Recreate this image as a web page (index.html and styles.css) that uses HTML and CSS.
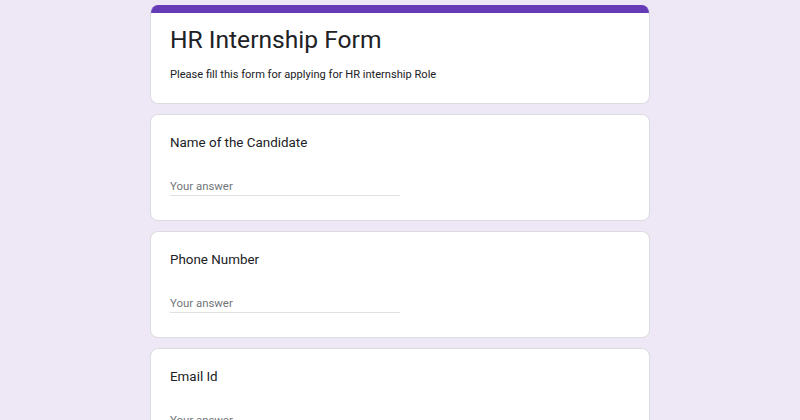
FILE: index.html
```html
<!DOCTYPE html>
<html lang="en">
<head>
<meta charset="utf-8">
<title>HR Internship Form</title>
<link rel="stylesheet" href="styles.css">
</head>
<body>
<main class="form">
  <section class="card header-card">
    <div class="bar"></div>
    <div class="header-body">
      <h1 class="title">HR Internship Form</h1>
      <p class="desc">Please fill this form for applying for HR internship Role</p>
    </div>
  </section>
  <section class="card question">
    <div class="q-label">Name of the Candidate</div>
    <div class="answer">Your answer</div>
  </section>
  <section class="card question">
    <div class="q-label">Phone Number</div>
    <div class="answer">Your answer</div>
  </section>
  <section class="card question">
    <div class="q-label">Email Id</div>
    <div class="answer">Your answer</div>
  </section>
</main>
</body>
</html>
```

FILE: styles.css
```css
html, body {
  margin: 0;
  padding: 0;
}
body {
  background: #ede7f6;
  font-family: Roboto, "Noto Sans", "Liberation Sans", sans-serif;
  color: #202124;
}
.form {
  width: 500px;
  margin: 0 auto;
  padding-top: 5px;
  display: flex;
  flex-direction: column;
  gap: 10px;
}
.card {
  background: #fff;
  border: 1px solid #dadce0;
  border-radius: 8px;
  overflow: hidden;
}
.header-card {
  border-top: none;
}
.bar {
  height: 8px;
  background: #673ab7;
}
.header-body {
  padding: 11px 19px 20px;
}
.title {
  margin: 0;
  font-size: 24.6px;
  line-height: 32px;
  font-weight: 400;
  color: #202124;
}
.desc {
  margin: 11px 0 0;
  font-size: 11.1px;
  line-height: 16px;
  color: #202124;
}
.question {
  padding: 18px 19px 24px;
}
.q-label {
  font-size: 13.4px;
  line-height: 20px;
  color: #202124;
}
.answer {
  margin-top: 24px;
  width: 230px;
  font-size: 11.4px;
  line-height: 18px;
  color: #70757a;
  border-bottom: 1px solid #e0e0e0;
}
```
